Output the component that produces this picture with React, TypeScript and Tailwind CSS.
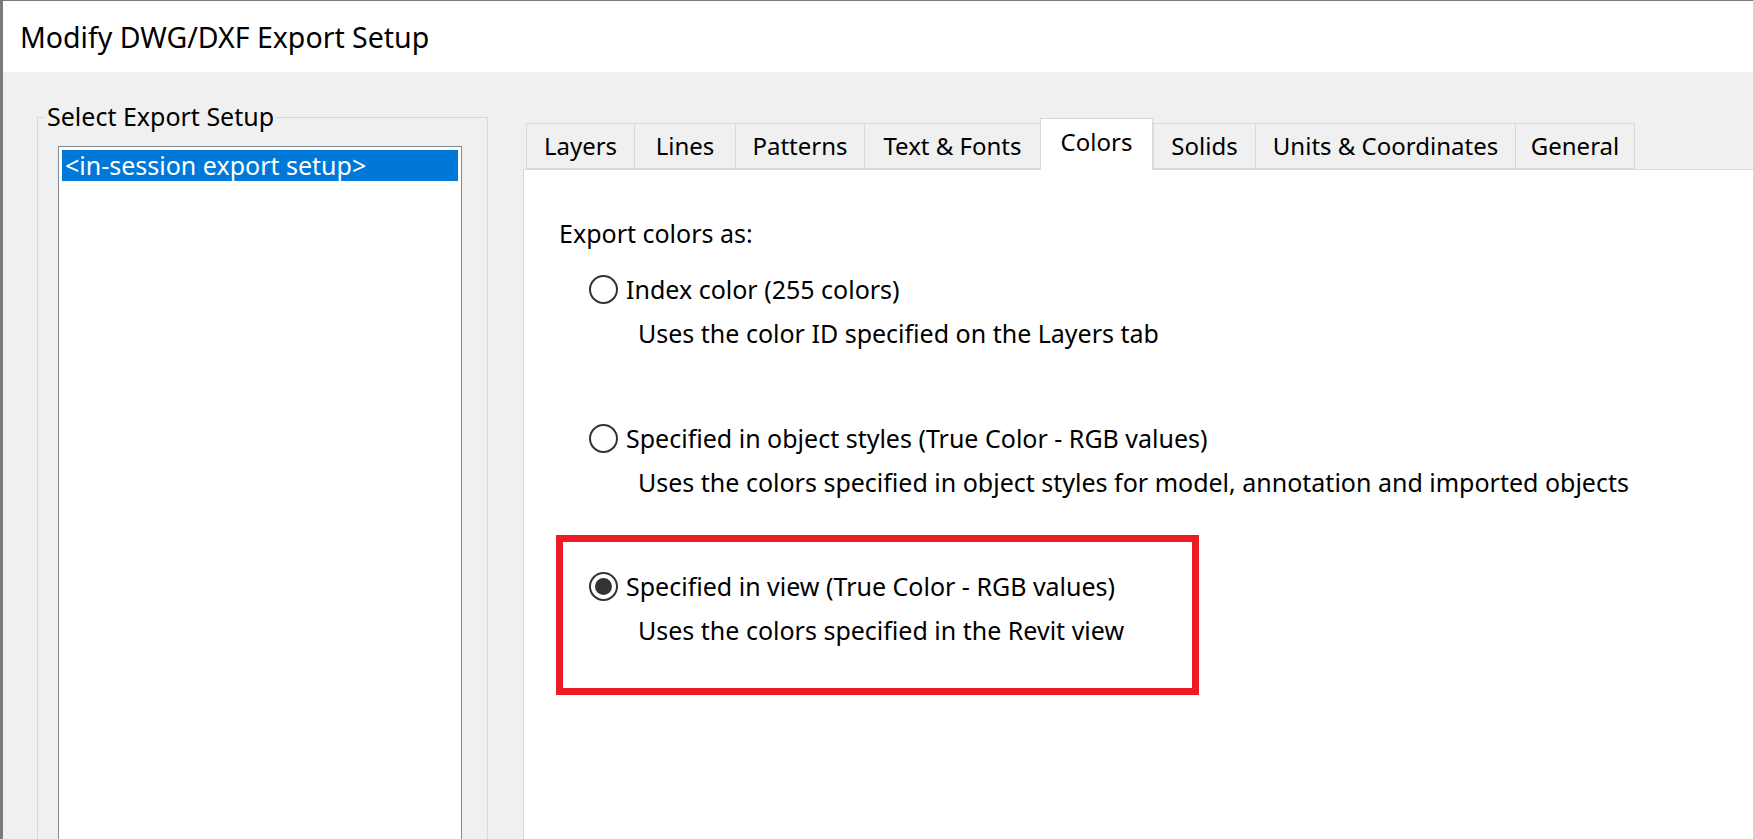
import React from "react";

const Radio = ({ checked }: { checked?: boolean }) => (
  <span className="w-[29px] h-[29px] rounded-full border-[2px] border-[#333] bg-white flex items-center justify-center shrink-0">
    {checked && <span className="w-[17px] h-[17px] rounded-full bg-[#333]" />}
  </span>
);

const tabs: [string, number][] = [
  ["Layers", 108], ["Lines", 101], ["Patterns", 129], ["Text & Fonts", 176],
  ["Colors", 113], ["Solids", 102], ["Units & Coordinates", 260], ["General", 120],
];

const Option = ({ label, desc, checked }: { label: string; desc: string; checked?: boolean }) => (
  <div className="flex flex-col">
    <div className="flex items-center gap-[8px] h-[34px]">
      <Radio checked={checked} />
      <span>{label}</span>
    </div>
    <div className="pl-[49px] mt-[10px]">{desc}</div>
  </div>
);

export default function App() {
  return (
    <div className="w-[1753px] h-[839px] overflow-hidden bg-[#f0f0f0] border-l-[3px] border-t border-[#7a7a7a] text-black text-[25px] leading-[34px]" style={{ fontFamily: '"Noto Sans", "Open Sans", sans-serif' }}>
      <div className="h-[71px] bg-white flex items-center pl-[17px] text-[28.5px]">Modify DWG/DXF Export Setup</div>
      <div className="flex">
        <div className="relative mt-[45px] ml-[34px] w-[451px] h-[760px] border border-[#d8d8d8] shrink-0">
          <span className="absolute -top-[19px] left-[7px] bg-[#f0f0f0] px-[2px]">Select Export Setup</span>
          <div className="mt-[28px] ml-[20px] w-[404px] h-[760px] bg-white border border-[#828790] p-[3px]">
            <div className="bg-[#0078d7] text-white h-[31px] leading-[30px] pl-[3px]">&lt;in-session export setup&gt;</div>
          </div>
        </div>
        <div className="flex-1 ml-[35px] mt-[45px] flex flex-col">
          <div className="flex items-end h-[52px] ml-[3px] text-[24px]">
            {tabs.map(([t, w]) =>
              t === "Colors" ? (
                <div key={t} style={{ width: w }} className="h-[52px] bg-white border border-b-0 border-[#d9d9d9] flex items-center justify-center relative top-[1px] z-10 pb-[6px]">{t}</div>
              ) : (
                <div key={t} style={{ width: w }} className="h-[46px] bg-[#f0f0f0] border border-[#d9d9d9] border-r-0 last:border-r flex items-center justify-center whitespace-nowrap">{t}</div>
              )
            )}
          </div>
          <div className="flex-1 bg-white border-l border-t border-[#d9d9d9] pl-[35px] pt-[46px]">
            <div>Export colors as:</div>
            <div className="mt-[22px] pl-[30px] flex flex-col">
              <Option label="Index color (255 colors)" desc="Uses the color ID specified on the Layers tab" />
              <div className="mt-[71px]">
                <Option label="Specified in object styles (True Color - RGB values)" desc="Uses the colors specified in object styles for model, annotation and imported objects" />
              </div>
              <div className="mt-[36px] -ml-[33px] w-[643px] h-[160px] border-[7px] border-[#ec1c24] pl-[26px] pt-[27px]">
                <Option checked label="Specified in view (True Color - RGB values)" desc="Uses the colors specified in the Revit view" />
              </div>
            </div>
          </div>
        </div>
      </div>
    </div>
  );
}
